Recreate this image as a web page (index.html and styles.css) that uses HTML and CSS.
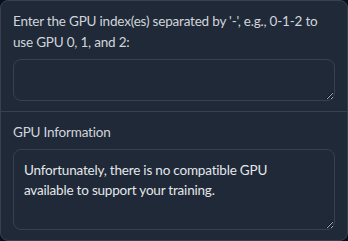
FILE: index.html
```html
<!DOCTYPE html>
<html>
<head>
<meta charset="utf-8">
<link rel="stylesheet" href="styles.css">
</head>
<body>
<div class="panel">
  <div class="block">
    <label class="field">
      <span class="label">Enter the GPU index(es) separated by '-', e.g., 0-1-2 to use GPU 0, 1, and 2:</span>
      <textarea class="input small"></textarea>
    </label>
  </div>
  <div class="block">
    <label class="field">
      <span class="label">GPU Information</span>
      <textarea class="input large">Unfortunately, there is no compatible GPU available to support your training.</textarea>
    </label>
  </div>
</div>
</body>
</html>
```
FILE: styles.css
```css
html, body {
  margin: 0;
  padding: 0;
  background: #0b0f19;
  width: 348px;
  height: 241px;
  overflow: hidden;
}
body {
  font-family: "Lato", "Liberation Sans", sans-serif;
  font-size: 13.5px;
  letter-spacing: -0.2px;
  color: #e5e7eb;
}
.panel {
  box-sizing: border-box;
  width: 348px;
  height: 241px;
  background: #1f2937;
  border: 1px solid #374151;
  border-radius: 8px;
  display: flex;
  flex-direction: column;
  overflow: hidden;
}
.block {
  padding: 10px 12px 10px 12px;
}
.block + .block {
  border-top: 1px solid #374151;
}
.field {
  display: flex;
  flex-direction: column;
  gap: 6px;
}
.label {
  line-height: 21px;
  color: #d1d5db;
}
.input {
  box-sizing: border-box;
  width: 100%;
  background: #1f2937;
  border: 1px solid #374151;
  border-radius: 8px;
  padding: 10px 24px 10px 10px;
  font-family: inherit;
  font-size: 13.5px;
  letter-spacing: -0.2px;
  line-height: 20px;
  color: #e5e7eb;
  resize: vertical;
  outline: none;
  display: block;
}
.small { height: 42px; }
.large { height: 81px; }
```
